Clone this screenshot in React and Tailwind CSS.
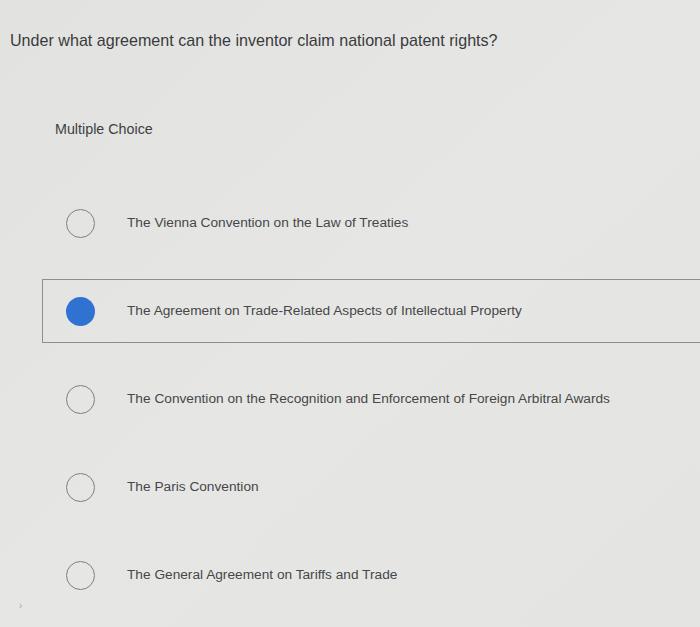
const options = [
  "The Vienna Convention on the Law of Treaties",
  "The Agreement on Trade-Related Aspects of Intellectual Property",
  "The Convention on the Recognition and Enforcement of Foreign Arbitral Awards",
  "The Paris Convention",
  "The General Agreement on Tariffs and Trade",
];

const selected = 1;

export default function App() {
  return (
    <div
      className="w-[700px] h-[627px] overflow-hidden bg-gradient-to-br from-[#e2e3e1] via-[#e6e7e5] to-[#e4e5e3] relative"
      style={{ fontFamily: '"Liberation Sans", Arial, sans-serif' }}
    >
      <h1 className="pt-[29px] pl-[10px] text-[16.1px] leading-[22px] text-[#3a3b3c] font-normal">
        Under what agreement can the inventor claim national patent rights?
      </h1>

      <p className="mt-[68px] ml-[55px] text-[14.3px] leading-[20px] text-[#3e3f40]">
        Multiple Choice
      </p>

      <ul className="mt-[52px] flex flex-col gap-6">
        {options.map((text, i) => (
          <li
            key={i}
            className={
              "ml-[42px] -mr-4 h-16 flex items-center pl-[23px] border " +
              (i === selected ? "border-[#8d8e8f]" : "border-transparent")
            }
          >
            {i === selected ? (
              <span className="w-[29px] h-[29px] rounded-full bg-[#3072d2] shrink-0" />
            ) : (
              <span className="w-[29px] h-[29px] rounded-full border-[1.5px] border-[#7e7f80] shrink-0" />
            )}
            <span className="ml-[32px] text-[13.7px] text-[#464748]">{text}</span>
          </li>
        ))}
      </ul>

      <span className="absolute left-[19px] top-[598px] text-[10px] text-[#a9aaab]">›</span>
    </div>
  );
}
